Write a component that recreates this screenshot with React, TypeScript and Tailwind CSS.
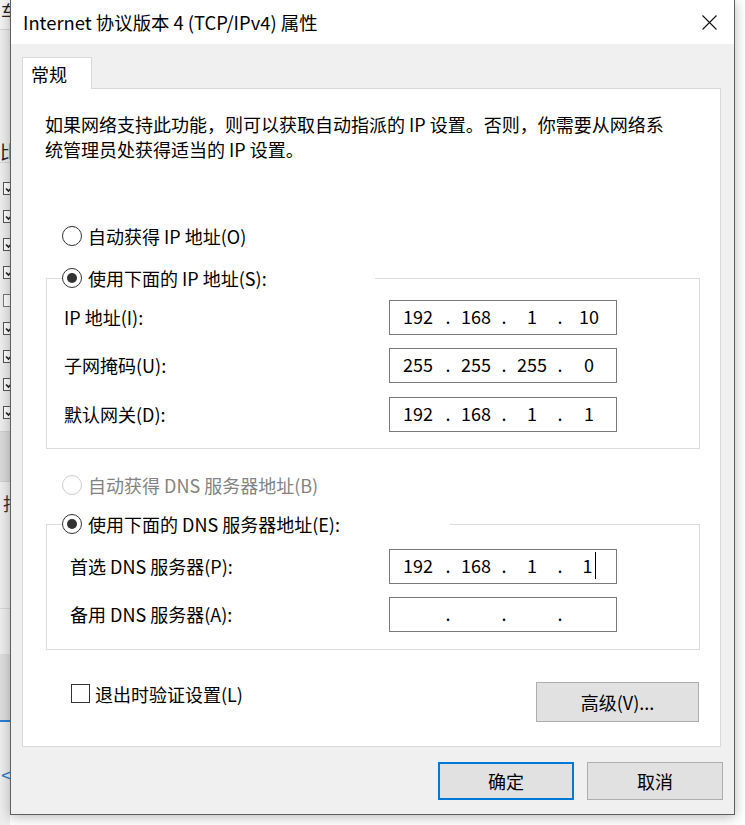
import type { ReactNode } from "react";

function Radio({ checked, disabled }: { checked?: boolean; disabled?: boolean }) {
  return (
    <span
      className={
        disabled
          ? "flex h-[20px] w-[20px] shrink-0 items-center justify-center rounded-full border border-[#cccccc] bg-white"
          : "flex h-[20px] w-[20px] shrink-0 items-center justify-center rounded-full border border-[#333333] bg-white"
      }
    >
      {checked && <span className="h-[10px] w-[10px] rounded-full bg-[#333333]" />}
    </span>
  );
}

function IpField({ octets, caret }: { octets: string[]; caret?: boolean }) {
  const widths = ["w-[56px]", "w-[52px]", "w-[52px]", "w-[54px]"];
  return (
    <div className="flex h-[35px] w-[228px] items-center border border-[#7a7a7a] bg-white pb-[3px] text-[18px] leading-[30px] text-black">
      {octets.map((o, i) => (
        <div key={i} className="flex items-center">
          <div className={`${widths[i]} flex items-center justify-center`}>
            <span>{o}</span>
            {caret && i === 3 && <span className="ml-[2px] inline-block h-[27px] w-px bg-black" />}
          </div>
          {i < 3 && <div className="flex w-[4px] justify-center">.</div>}
        </div>
      ))}
    </div>
  );
}

function FieldRow({ label, octets, caret, indent, className }: { label: string; octets: string[]; caret?: boolean; indent?: boolean; className: string }) {
  return (
    <div className={`flex items-center ${className}`}>
      <div className={indent ? "w-[342px] pl-[23px]" : "w-[342px] pl-[17px]"}>{label}</div>
      <IpField octets={octets} caret={caret} />
    </div>
  );
}

function Group({ legendWidth, label, children }: { legendWidth: string; label: ReactNode; children: ReactNode }) {
  return (
    <fieldset className="ml-[23px] mr-[20px] border border-[#dcdcdc]">
      <legend className={`ml-[15px] ${legendWidth}`}>
        <div className="flex h-[20px] items-center gap-[6px] leading-[20px]">
          <Radio checked />
          <span className="whitespace-nowrap">{label}</span>
        </div>
      </legend>
      {children}
    </fieldset>
  );
}

function CheckMark() {
  return (
    <div className="mt-[7px] flex h-[13px] w-[13px] shrink-0 items-center justify-center border border-[#555555] bg-white">
      <svg width="9" height="9" viewBox="0 0 9 9">
        <path d="M1 4.5 L3.5 7 L8 2" stroke="#222222" strokeWidth="1.6" fill="none" />
      </svg>
    </div>
  );
}

// the window behind the dialog, only its last few pixels show
function BackgroundStrip() {
  const boxes = [true, true, true, true, false, true, true, true, true];
  return (
    <div className="flex w-[10px] shrink-0 flex-col overflow-hidden bg-[#eeeeee] text-[18px] leading-[22px]">
      <div className="h-[30px] whitespace-nowrap border-b border-[#d4d4d4] bg-[#f4f4f4] pl-[1px] text-[#222]">车</div>
      <div className="h-[133px] border-b border-[#d4d4d4] pt-[110px] whitespace-nowrap text-[#222]">比</div>
      <div className="flex flex-col pl-[3px] pt-[12px]">
        {boxes.map((c, i) => (
          <div key={i} className="flex h-[28px] items-start">
            {c ? <CheckMark /> : <div className="mt-[7px] h-[13px] w-[13px] shrink-0 border border-[#777777] bg-white" />}
          </div>
        ))}
      </div>
      <div className="h-[4px]" />
      <div className="h-[51px] border-y border-[#cfcfcf] bg-[#dadada]" />
      <div className="h-[127px] whitespace-nowrap border-b border-[#d8d8d8] pl-[3px] pt-[10px] text-[#333]">拒</div>
      <div className="h-[45px]" />
      <div className="h-[68px] border-b-2 border-dashed border-[#2a7fd0] bg-[#dedede]" />
      <div className="pl-[1px] pt-[42px] text-[20px] text-[#2a7fd0]">&lt;</div>
    </div>
  );
}

export default function App() {
  return (
    <div className="flex h-[825px] w-[745px] overflow-hidden bg-white font-['Noto_Sans_CJK_SC',sans-serif] text-[18px] text-black">
      <BackgroundStrip />
      <div className="flex h-[815px] w-[725px] shrink-0 flex-col border-x border-b border-[#5f5f5f] shadow-[0_2px_12px_rgba(0,0,0,0.28)]">
        {/* title bar */}
        <div className="flex h-[44px] shrink-0 items-center justify-between bg-white pl-[12px] pr-[17px]">
          <span className="text-[18.4px] leading-[24px]">Internet 协议版本 4 (TCP/IPv4) 属性</span>
          <svg width="15" height="15" viewBox="0 0 15 15">
            <path d="M0.5 0.5 L14.5 14.5 M14.5 0.5 L0.5 14.5" stroke="#111111" strokeWidth="1.1" />
          </svg>
        </div>

        <div className="flex flex-1 flex-col bg-[#f0f0f0] pl-[11px] pr-[13px] pt-[13px]">
          {/* tab */}
          <div className="relative z-10 -mb-px flex h-[32px] w-[70px] items-center border border-b-0 border-[#d9d9d9] bg-white pl-[8px] leading-[22px]">
            常规
          </div>

          {/* panel */}
          <div className="flex flex-col border border-[#d9d9d9] bg-white pb-[24px]">
            <div className="pl-[22px] pt-[23px] leading-[25px]">
              <div className="whitespace-nowrap">如果网络支持此功能，则可以获取自动指派的 IP 设置。否则，你需要从网络系</div>
              <div className="whitespace-nowrap">统管理员处获得适当的 IP 设置。</div>
            </div>

            <div className="ml-[39px] mt-[64px] flex h-[20px] items-center gap-[6px] leading-[20px]">
              <Radio />
              <span>自动获得 IP 地址(O)</span>
            </div>

            <div className="mt-[22px]">
              <Group legendWidth="w-[313px]" label="使用下面的 IP 地址(S):">
                <div className="flex flex-col pb-[16px]">
                  <FieldRow className="mt-[12px]" label="IP 地址(I):" octets={["192", "168", "1", "10"]} />
                  <FieldRow className="mt-[13px]" label="子网掩码(U):" octets={["255", "255", "255", "0"]} />
                  <FieldRow className="mt-[14px]" label="默认网关(D):" octets={["192", "168", "1", "1"]} />
                </div>
              </Group>
            </div>

            <div className="ml-[39px] mt-[26px] flex h-[20px] items-center gap-[6px] leading-[20px] text-[#838383]">
              <Radio disabled />
              <span>自动获得 DNS 服务器地址(B)</span>
            </div>

            <div className="mt-[19px]">
              <Group legendWidth="w-[388px]" label="使用下面的 DNS 服务器地址(E):">
                <div className="flex flex-col pb-[17px]">
                  <FieldRow className="mt-[15px]" indent label="首选 DNS 服务器(P):" octets={["192", "168", "1", "1"]} caret />
                  <FieldRow className="mt-[13px]" indent label="备用 DNS 服务器(A):" octets={["", "", "", ""]} />
                </div>
              </Group>
            </div>

            <div className="mt-[32px] flex items-start justify-between pl-[48px] pr-[21px]">
              <div className="mt-[2px] flex h-[19px] items-center gap-[5px] leading-[20px]">
                <span className="h-[19px] w-[19px] border border-[#333333] bg-white" />
                <span>退出时验证设置(L)</span>
              </div>
              <button className="flex h-[40px] w-[163px] items-center justify-center border border-[#adadad] bg-[#e1e1e1] leading-[22px]">
                高级(V)...
              </button>
            </div>
          </div>

          {/* bottom buttons */}
          <div className="-mr-[2px] mt-[15px] flex justify-end gap-[13px]">
            <button className="flex h-[38px] w-[136px] items-center justify-center border-2 border-[#0078d7] bg-[#e1e1e1] leading-[22px]">
              确定
            </button>
            <button className="flex h-[38px] w-[136px] items-center justify-center border border-[#adadad] bg-[#e1e1e1] leading-[22px]">
              取消
            </button>
          </div>
        </div>
      </div>
    </div>
  );
}
